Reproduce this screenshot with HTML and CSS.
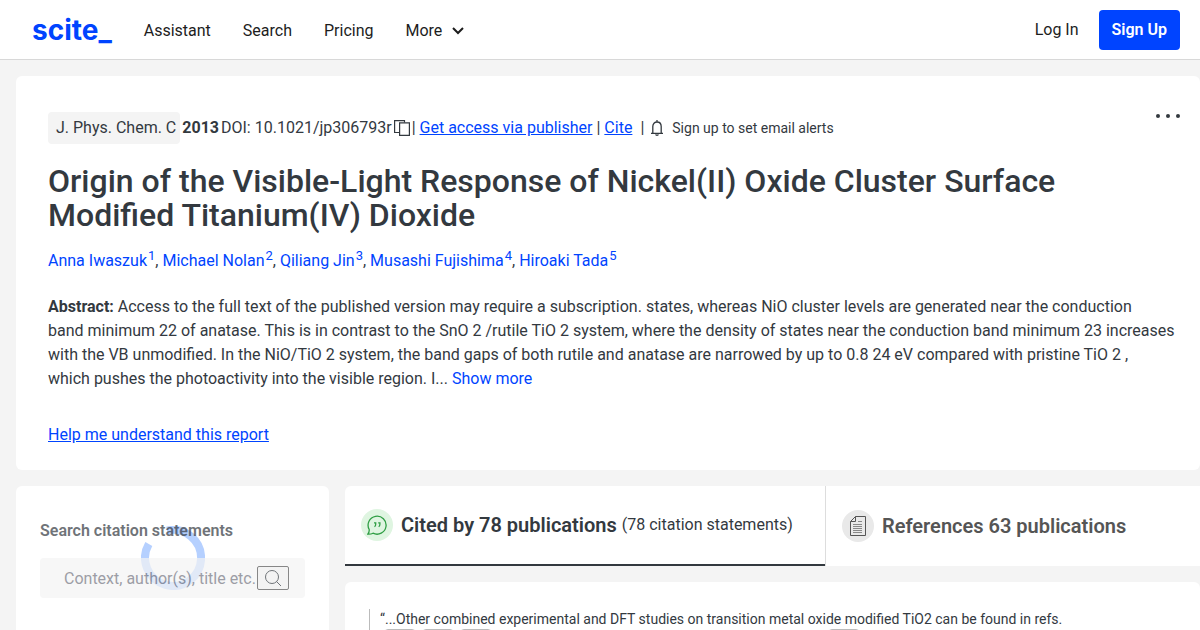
FILE: index.html
```html
<!DOCTYPE html>
<html lang="en">
<head>
  <meta charset="UTF-8">
  <title>Origin of the Visible-Light Response of Nickel(II) Oxide Cluster Surface Modified Titanium(IV) Dioxide</title>
  <meta name="viewport" content="width=device-width, initial-scale=1">
  <link rel="stylesheet" href="styles.css">
</head>
<body>

<header class="navbar">
  <a class="logo" href="#">scite_</a>
  <nav class="nav-links">
    <a href="#">Assistant</a>
    <a href="#">Search</a>
    <a href="#">Pricing</a>
    <button class="more-button" type="button">More
      <svg width="12" height="8" viewBox="0 0 12 8" fill="none" stroke="currentColor" stroke-width="2"><path d="M1 1l5 5 5-5"/></svg>
    </button>
  </nav>
  <div class="nav-account">
    <a href="#">Log In</a>
    <a class="signup-button" href="#">Sign Up</a>
  </div>
</header>

<main>
  <section class="card paper">
    <div class="paper-top">
      <div class="paper-meta">
        <span class="journal">J. Phys. Chem. C</span>
        <strong class="year">2013</strong>
        <span class="doi">DOI: 10.1021/jp306793r</span>
        <button class="icon-button copy-button" type="button" aria-label="Copy DOI">
          <svg width="16" height="16" viewBox="0 0 16 16" fill="none" stroke="currentColor" stroke-width="1.200"><path d="M5.500 12.500H.6V.6h9.900v2"/><path d="M5.600 2.800h9.800v12.600H5.600z"/></svg>
        </button>
        <span>|</span>
        <a class="link" href="#">Get access via publisher</a>
        <span>|</span>
        <a class="link" href="#">Cite</a>
        <span class="divider">|</span>
        <button class="icon-button alert-button" type="button">
          <svg width="14" height="16" viewBox="0 0 14 16" fill="none" stroke="currentColor" stroke-width="1.300"><path d="M7 0v2M1 13.400h12M2.800 13V6.500C2.800 3.700 4.600 2 7 2s4.200 1.700 4.200 4.500V13M5.500 14.500c.5 1 2.500 1 3 0"/></svg>
          Sign up to set email alerts
        </button>
      </div>
      <button class="icon-button menu-button" type="button" aria-label="More actions">
        <svg width="24" height="4" viewBox="0 0 24 4" fill="currentColor"><circle cx="2" cy="2" r="2"/><circle cx="12" cy="2" r="2"/><circle cx="22" cy="2" r="2"/></svg>
      </button>
    </div>

    <h1>Origin of the Visible-Light Response of Nickel(II) Oxide Cluster Surface Modified Titanium(IV) Dioxide</h1>

    <p class="authors">
      <a href="#">Anna Iwaszuk<sup>1</sup></a>, <a href="#">Michael Nolan<sup>2</sup></a>, <a href="#">Qiliang Jin<sup>3</sup></a>, <a href="#">Musashi Fujishima<sup>4</sup></a>, <a href="#">Hiroaki Tada<sup>5</sup></a>
    </p>

    <p class="abstract"><strong>Abstract:</strong> Access to the full text of the published version may require a subscription. states, whereas NiO cluster levels are generated near the conduction<br>
      band minimum 22 of anatase. This is in contrast to the SnO 2 /rutile TiO 2 system, where the density of states near the conduction band minimum 23 increases<br>
      with the VB unmodified. In the NiO/TiO 2 system, the band gaps of both rutile and anatase are narrowed by up to 0.8 24 eV compared with pristine TiO 2 ,<br>
      which pushes the photoactivity into the visible region. I... <a href="#">Show more</a></p>

    <a class="link" href="#">Help me understand this report</a>
  </section>

  <div class="columns">
    <aside class="card sidebar">
      <svg class="spinner" width="64" height="64" viewBox="0 0 64 64" fill="none" stroke="#0f65ff" stroke-width="8"><path d="M26 4.600A28 28 0 1 1 7.800 18"/></svg>
      <form class="search-form">
        <label for="search">Search citation statements</label>
        <div class="search-box">
          <input type="text" id="search" placeholder="Context, author(s), title etc.">
          <button class="search-button" type="button" aria-label="Search">
            <svg width="18" height="18" viewBox="0 0 18 18" fill="none" stroke="currentColor"><circle cx="8" cy="8" r="6.500"/><path d="M12.500 12.500l4.500 4.500"/></svg>
          </button>
        </div>
      </form>
    </aside>

    <div class="results">
      <div class="tabs">
        <button class="tab active" type="button">
          <span class="tab-icon">
            <svg width="20" height="20" viewBox="0 0 20 20" fill="none" stroke="currentColor" stroke-width="1.300"><path d="M2.200 14.500A9 9 0 1 1 6 18.200c-1.500.8-3 1-5.200.9 1-1.200 1.600-2.500 1.400-4.600z"/><path d="M7 7.800h1.700v1.400c0 1.200-.4 2-1.200 2.500M11.200 7.800h1.700v1.400c0 1.200-.4 2-1.200 2.500"/></svg>
          </span>
          <span class="tab-title">Cited by 78 publications</span>
          <span class="tab-note">(78 citation statements)</span>
        </button>
        <button class="tab" type="button">
          <span class="tab-icon">
            <svg width="16" height="20" viewBox="0 0 16 20" fill="none" stroke="currentColor"><path d="M5.500.5h10v19H.5v-14z"/><path d="M5.500.5v5h-5"/><path stroke="#888" d="M8 5.500h4M3 8.500h9M3 10.500h9M3 12.500h9M3 14.500h9M3 16.500h9"/></svg>
          </span>
          <span class="tab-title">References 63 publications</span>
        </button>
      </div>

      <article class="card statement">
        <blockquote>
          “...Other combined experimental and DFT studies on transition metal oxide modified TiO2 can be found in refs.
          <div class="refs"><span></span><span></span><span></span><span class="ref-far"></span></div>
        </blockquote>
      </article>
    </div>
  </div>
</main>

</body>
</html>
```
FILE: styles.css
```css
* {
  box-sizing: border-box;
}

body {
  margin: 0;
  background-color: #f4f4f4;
  color: #33393f;
  font-family: Roboto, "Liberation Sans", sans-serif;
  font-size: 16px;
  line-height: 24px;
  overflow-x: hidden;
}

a {
  color: #0044ff;
  text-decoration: none;
}

button {
  padding: 0;
  border: none;
  background: none;
  color: inherit;
  font: inherit;
  cursor: pointer;
}

svg {
  display: block;
  flex: none;
}

.navbar {
  display: flex;
  align-items: center;
  height: 60px;
  padding: 0 20px 0 32px;
  background-color: #fff;
  border-bottom: 1px solid #d8d8d8;
}

.logo {
  font-family: Inter, sans-serif;
  font-size: 28px;
  font-weight: 700;
}

.nav-links,
.nav-account {
  display: flex;
  align-items: center;
  gap: 32px;
}

.nav-links {
  margin-left: 32px;
  padding-top: 2px;
}

.nav-links a,
.nav-account a {
  color: #1d1d1d;
}

.more-button {
  display: flex;
  align-items: center;
  gap: 10px;
  color: #1d1d1d;
}

.nav-account {
  margin-left: auto;
  gap: 20px;
}

.nav-account .signup-button {
  padding: 8px 13px;
  border-radius: 4px;
  background-color: #0044ff;
  color: #fff;
  font-weight: 600;
}

main {
  padding: 16px 0 0 16px;
}

.card {
  background-color: #fff;
  border-radius: 6px;
}

.paper {
  padding: 32px 32px 23px;
}

.paper-top {
  display: flex;
  justify-content: space-between;
  margin-right: -12px;
}

.paper-meta {
  display: flex;
  align-items: center;
  flex-wrap: wrap;
  gap: 2px;
  margin-top: 4px;
}

.journal {
  padding: 4px 4px 4px 8px;
  border-radius: 4px;
  background-color: #f4f4f4;
}

.link {
  text-decoration: underline;
}

.paper-meta .link {
  margin: 0 2px;
}

.icon-button {
  display: flex;
  align-items: center;
}

.divider {
  margin: 0 4px;
}

.alert-button {
  gap: 8px;
  font-size: 14px;
}

.menu-button {
  height: 16px;
}

h1 {
  margin: 20px 0 17px;
  font-size: 32px;
  font-weight: 500;
  line-height: 34px;
}

.authors {
  margin: 0 0 22px;
}

.authors sup {
  margin-left: 1px;
  font-size: 13px;
  line-height: 0;
}

.abstract {
  margin: 0 -12px 32px 0;
}

.columns {
  display: flex;
  gap: 16px;
  margin-top: 16px;
}

.sidebar {
  position: relative;
  flex: none;
  width: 313px;
  min-height: 320px;
  padding: 33px 24px;
}

/* loading ring shows through the faded form */
.spinner {
  position: absolute;
  top: 40px;
  left: 125px;
  opacity: 0.3;
}

.search-form {
  position: relative;
  opacity: 0.7;
}

.search-form label {
  display: block;
  margin-bottom: 15px;
  font-weight: 600;
}

.search-box {
  display: flex;
  align-items: center;
  height: 40px;
  padding: 0 16px 0 24px;
  border-radius: 4px;
  background-color: #f4f4f4;
}

.search-box input {
  flex: 1;
  min-width: 0;
  padding: 2px 0 0;
  border: none;
  outline: none;
  background: none;
  font: inherit;
}

.search-box input::placeholder {
  color: #737580;
}

.search-button {
  display: flex;
  align-items: center;
  justify-content: center;
  width: 32px;
  height: 24px;
  border: 1px solid #555;
  border-radius: 2px;
  background-color: #efefef;
}

.results {
  flex: 1;
  min-width: 0;
}

.tabs {
  display: flex;
  height: 80px;
  border-radius: 6px 0 0 0;
  background-color: #fff;
  overflow: hidden;
}

.tab {
  display: flex;
  align-items: center;
  padding: 0 16px;
  color: #555;
  white-space: nowrap;
}

.tab.active {
  width: 480px;
  border-bottom: 2px solid #33393f;
  color: #33393f;
}

.tab + .tab {
  border-left: 1px solid #ddd;
}

.tab-icon {
  display: flex;
  align-items: center;
  justify-content: center;
  width: 32px;
  height: 32px;
  margin-right: 8px;
  border-radius: 50%;
  background-color: #e9e9e9;
}

.active .tab-icon {
  background-color: #dff5e1;
  color: #2f9e44;
}

.tab-title {
  font-size: 20px;
  font-weight: 600;
}

.tab-note {
  margin-left: 5px;
}

.statement {
  min-height: 220px;
  margin-top: 16px;
  padding: 27px 24px;
}

blockquote {
  margin: 0;
  padding-left: 10px;
  border-left: 1px solid #bbb;
  font-size: 14px;
  line-height: 20px;
}

.refs {
  display: flex;
  gap: 6px;
  padding-left: 4px;
}

.refs span {
  width: 32px;
  height: 20px;
  border: 1px solid #bbb;
  border-radius: 4px;
}

.refs .ref-far {
  margin-left: 330px;
}
```
